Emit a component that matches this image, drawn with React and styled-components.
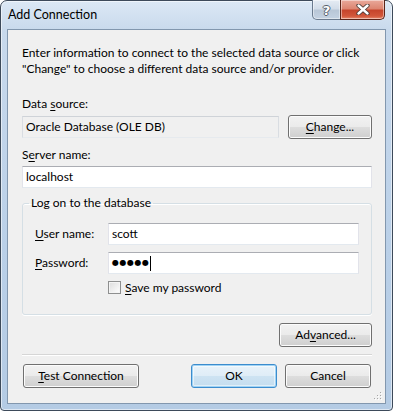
import React from 'react'
import styled, { createGlobalStyle } from 'styled-components'

const GlobalStyle = createGlobalStyle`
  html, body {
    margin: 0;
    padding: 0;
    background: #ffffff;
  }
  body {
    font-family: Lato, "Noto Sans", sans-serif;
    font-size: 12px;
    color: #000;
  }
`

const Window = styled.div`
  box-sizing: border-box;
  width: 393px;
  height: 411px;
  border: 1px solid #3d4a5a;
  border-radius: 7px 7px 4px 4px;
  background: linear-gradient(to bottom, #dce8f5 0, #c8d9ec 30px, #bad0e8 60%, #b4cbe4 100%);
  padding: 0 6px 6px 6px;
  display: flex;
  flex-direction: column;
  box-shadow: inset 0 0 0 1px rgba(255, 255, 255, 0.55);
`

const TitleBar = styled.div`
  height: 28px;
  display: flex;
  align-items: flex-start;
  justify-content: space-between;
`

const Title = styled.div`
  padding: 6px 0 0 1px;
  line-height: 16px;
  font-size: 12.5px;
  color: #000;
`

const CaptionButtons = styled.div`
  display: flex;
  margin-top: -1px;
  margin-right: 1px;
`

const CaptionButton = styled.div`
  box-sizing: border-box;
  height: 20px;
  width: ${p => (p.$close ? '45px' : '29px')};
  border: 1px solid ${p => (p.$close ? '#5a2419' : '#6a7a8e')};
  border-top: none;
  border-radius: ${p => (p.$close ? '0 0 5px 0' : '0 0 0 5px')};
  margin-left: ${p => (p.$close ? '-1px' : '0')};
  background: ${p =>
    p.$close
      ? 'linear-gradient(to bottom, #e9a99b 0, #dd8672 45%, #c6452c 55%, #d2573b 85%, #e88b6f 100%)'
      : 'linear-gradient(to bottom, #e5ecf4 0, #d3dde9 45%, #b9c7d7 55%, #c4d2e2 100%)'};
  box-shadow: inset 0 0 0 1px rgba(255, 255, 255, 0.45);
  display: flex;
  align-items: center;
  justify-content: center;
`

const HelpGlyph = styled.span`
  font-family: "DejaVu Sans", sans-serif;
  font-weight: bold;
  font-size: 13px;
  line-height: 1;
  color: #fff;
  margin-top: 1px;
  text-shadow: 1px 0 0 #56606c, -1px 0 0 #56606c, 0 1px 0 #56606c, 0 -1px 0 #56606c;
`

const Client = styled.div`
  position: relative;
  flex: 1;
  box-sizing: border-box;
  background: #f0f0f0;
  border: 1px solid #8297ae;
  padding: 15px 13px 0 14px;
  display: flex;
  flex-direction: column;
`

const Intro = styled.p`
  margin: 0;
  line-height: 16px;
  white-space: nowrap;
`

const Label = styled.div`
  line-height: 16px;
  margin-top: ${p => p.$top || 0}px;
`

const Mnemonic = styled.span`
  text-decoration: underline;
  text-underline-offset: 2px;
`

const Row = styled.div`
  display: flex;
  align-items: ${p => p.$align || 'center'};
  justify-content: ${p => p.$justify || 'flex-start'};
  gap: ${p => p.$gap || 0}px;
  margin-top: ${p => p.$top || 0}px;
`

const TextBox = styled.div`
  box-sizing: border-box;
  height: 22px;
  width: ${p => (p.$width ? `${p.$width}px` : 'auto')};
  flex: ${p => (p.$width ? 'none' : '1')};
  background: ${p => (p.$readOnly ? '#f0f0f0' : '#ffffff')};
  border: 1px solid ${p => (p.$readOnly ? '#d9dde2' : '#e2e3ea')};
  border-top-color: ${p => (p.$readOnly ? '#cfd3d8' : '#abadb3')};
  border-bottom-color: ${p => (p.$readOnly ? '#e6eaee' : '#e3e9ef')};
  padding: 0 3px;
  display: flex;
  align-items: center;
  line-height: 16px;
`

const Dots = styled.span`
  font-family: "DejaVu Sans", sans-serif;
  font-size: 8px;
  letter-spacing: 0.5px;
  line-height: 1;
`

const Caret = styled.span`
  display: inline-block;
  width: 1px;
  height: 15px;
  background: #000;
  margin-left: 1px;
`

const Button = styled.button`
  box-sizing: border-box;
  width: ${p => p.$width}px;
  height: 24px;
  padding: 0;
  font-family: inherit;
  font-size: 12px;
  color: #000;
  border: 1px solid ${p => (p.$primary ? '#3c8ccd' : '#707070')};
  border-radius: 3px;
  background: ${p =>
    p.$primary
      ? 'linear-gradient(to bottom, #e9f3fa 0, #dfedf7 48%, #cde3f2 52%, #c4ddef 100%)'
      : 'linear-gradient(to bottom, #f2f2f2 0, #ebebeb 48%, #dddddd 52%, #cfcfcf 100%)'};
  box-shadow: ${p =>
    p.$primary
      ? 'inset 0 0 0 1px #9fd3f5, inset 0 0 0 2px rgba(255,255,255,0.5)'
      : 'inset 0 0 0 1px #fcfcfc'};
  line-height: 16px;
`

const GroupBox = styled.fieldset`
  margin: 7px 0 0 0;
  padding: 0 12px 19px 12px;
  border: 1px solid #d5dfe5;
  border-radius: 3px;
  box-shadow: 0 1px 0 #ffffff, inset 0 1px 0 #ffffff;
`

const Legend = styled.legend`
  padding: 0 2px;
  margin-left: -6px;
  line-height: 16px;
`

const FieldLabel = styled.div`
  width: 73px;
  flex: none;
  line-height: 16px;
`

const CheckBox = styled.span`
  box-sizing: border-box;
  width: 13px;
  height: 13px;
  border: 1px solid #8e8f8f;
  background: linear-gradient(135deg, #dcdcdc 0, #f4f4f4 70%, #ffffff 100%);
  box-shadow: inset 0 0 0 1px #f4f4f4;
  margin-left: 73px;
  margin-right: 4px;
`

const Separator = styled.div`
  height: 1px;
  background: #d6d6d6;
  border-bottom: 1px solid #ffffff;
  margin-top: 7px;
`

const Grip = styled.svg`
  position: absolute;
  right: 2px;
  bottom: 2px;
`

function App() {
  return (
    <>
      <GlobalStyle />
      <Window>
        <TitleBar>
          <Title>Add Connection</Title>
          <CaptionButtons>
            <CaptionButton>
              <HelpGlyph>?</HelpGlyph>
            </CaptionButton>
            <CaptionButton $close>
              <svg width="14" height="11" viewBox="0 0 14 11">
                <path d="M2.5 1.5 L11.5 9.5 M11.5 1.5 L2.5 9.5" stroke="#4a3a36" strokeWidth="4.2" strokeLinecap="round" />
                <path d="M2.5 1.5 L11.5 9.5 M11.5 1.5 L2.5 9.5" stroke="#ffffff" strokeWidth="2.4" strokeLinecap="round" />
              </svg>
            </CaptionButton>
          </CaptionButtons>
        </TitleBar>
        <Client>
          <Intro>
            Enter information to connect to the selected data source or click
            <br />
            "Change" to choose a different data source and/or provider.
          </Intro>

          <Label $top={19}>Data <Mnemonic>s</Mnemonic>ource:</Label>
          <Row $top={3} $align="flex-start" $justify="space-between">
            <TextBox $readOnly $width={257} style={{ marginTop: 1 }}>Oracle Database (OLE DB)</TextBox>
            <Button $width={84}><Mnemonic>C</Mnemonic>hange...</Button>
          </Row>

          <Label $top={8}>S<Mnemonic>e</Mnemonic>rver name:</Label>
          <Row $top={3}>
            <TextBox>localhost</TextBox>
          </Row>

          <GroupBox>
            <Legend>Log on to the database</Legend>
            <Row $top={12}>
              <FieldLabel><Mnemonic>U</Mnemonic>ser name:</FieldLabel>
              <TextBox>scott</TextBox>
            </Row>
            <Row $top={7}>
              <FieldLabel><Mnemonic>P</Mnemonic>assword:</FieldLabel>
              <TextBox>
                <Dots>●●●●●</Dots>
                <Caret />
              </TextBox>
            </Row>
            <Row $top={6}>
              <CheckBox />
              <span><Mnemonic>S</Mnemonic>ave my password</span>
            </Row>
          </GroupBox>

          <Row $top={8} $justify="flex-end">
            <Button $width={93}>Ad<Mnemonic>v</Mnemonic>anced...</Button>
          </Row>

          <Separator />

          <Row $top={8}>
            <Button $width={116} style={{ marginLeft: 1 }}><Mnemonic>T</Mnemonic>est Connection</Button>
            <Button $width={86} $primary style={{ marginLeft: 52 }}>OK</Button>
            <Button $width={86} style={{ marginLeft: 8 }}>Cancel</Button>
          </Row>

          <Grip width="10" height="10" viewBox="0 0 10 10">
            {[[8, 2], [8, 5], [8, 8], [5, 5], [5, 8], [2, 8]].map(([x, y]) => (
              <g key={`${x}-${y}`}>
                <rect x={x} y={y} width="1" height="1" fill="#ffffff" />
                <rect x={x - 1} y={y - 1} width="1" height="1" fill="#a7a7a7" />
              </g>
            ))}
          </Grip>
        </Client>
      </Window>
    </>
  )
}

export default App
